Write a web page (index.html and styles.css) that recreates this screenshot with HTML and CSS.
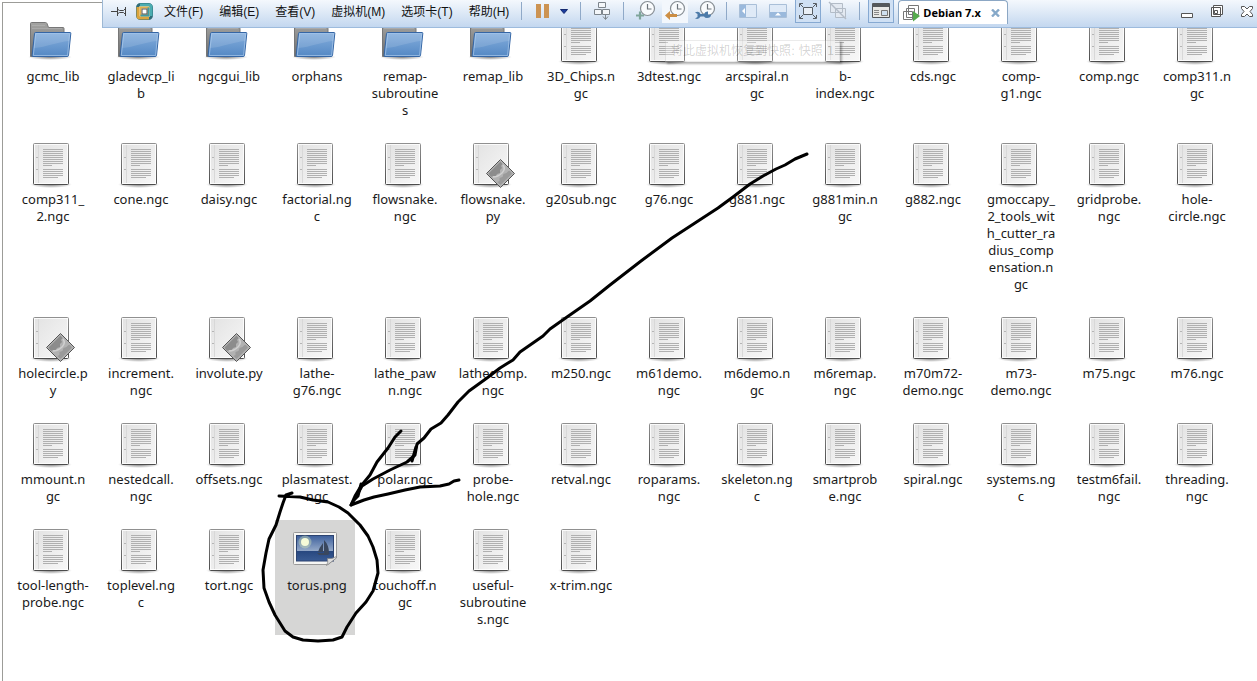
FILE: index.html
```html
<!DOCTYPE html>
<html lang="zh-CN">
<head>
    <meta charset="UTF-8">
    <meta name="viewport" content="width=device-width, initial-scale=1.0">
    <title>Debian 7.x</title>
    <link rel="stylesheet" href="styles.css">
</head>
<body>

    <!-- shared icons -->
    <svg class="defs" width="0" height="0">
        <defs>
            <linearGradient id="gBlue" x1="0" y1="0" x2="0" y2="1">
                <stop offset="0" stop-color="#86afdd"/>
                <stop offset="1" stop-color="#5488c4"/>
            </linearGradient>
            <linearGradient id="gGray" x1="0" y1="0" x2="0" y2="1">
                <stop offset="0" stop-color="#a5a5a3"/>
                <stop offset="1" stop-color="#6c6c6c"/>
            </linearGradient>
            <linearGradient id="gPaper" x1="0" y1="0" x2="1" y2="1">
                <stop offset="0" stop-color="#e2e2e2"/>
                <stop offset="1" stop-color="#f8f8f8"/>
            </linearGradient>
            <linearGradient id="gEdge" x1="0" y1="0" x2="0" y2="1">
                <stop offset="0" stop-color="#909090"/>
                <stop offset="1" stop-color="#4c4c4c"/>
            </linearGradient>
            <linearGradient id="gSky" x1="0" y1="0" x2="0" y2="1">
                <stop offset="0" stop-color="#3c5f9c"/>
                <stop offset=".6" stop-color="#94a9c8"/>
                <stop offset=".61" stop-color="#27477f"/>
                <stop offset="1" stop-color="#3a5c94"/>
            </linearGradient>
            <radialGradient id="gShade">
                <stop offset="0" stop-color="#000" stop-opacity=".5"/>
                <stop offset="1" stop-color="#000" stop-opacity="0"/>
            </radialGradient>
        </defs>
        <symbol id="folder" viewBox="0 0 48 48">
            <ellipse cx="23" cy="40" rx="22" ry="3" fill="url(#gShade)"/>
            <path d="M3.500 39.500V6.500q0-1 1-1h14q1 0 1.500 1l1.500 4H36q1 0 1 1V39.500z" fill="url(#gGray)" stroke="#777"/>
            <path d="M5 8.500h13M5 11.500h30" stroke="#b5b5b5" stroke-width=".6"/>
            <path d="M8.500 15.500H43q1 0 .8 1L41.500 38.500q-.2 1-1.200 1H6q-1 0-.9-1L7.500 16.500q.1-1 1-1z" fill="url(#gBlue)" stroke="#3566a5"/>
            <path d="M8.700 16.500H42.700L40.600 38.500H6.300z" fill="none" stroke="#a9c8eb" stroke-width=".7"/>
            <path d="M8.500 17H42.500L42 24C30 25 20 30 7 31z" fill="#fff" opacity=".12"/>
        </symbol>
        <symbol id="paper" viewBox="0 0 48 48">
            <ellipse cx="24" cy="44.500" rx="21" ry="3.500" fill="url(#gShade)"/>
            <rect x="6.500" y="3.500" width="35" height="41" rx="1" fill="url(#gPaper)" stroke="url(#gEdge)"/>
            <rect x="7.500" y="4.500" width="33" height="39" fill="none" stroke="#fff" stroke-opacity=".8"/>
            <path d="M11.500 5v38" stroke="#d8d8d8"/>
            <path d="M9 17.500h2M9 29.500h2" stroke="#b5b5b5"/>
        </symbol>
        <symbol id="doc" viewBox="0 0 48 48">
            <use href="#paper"/>
            <path d="M16 9.500h20M16 11.500h20M16 13.500h20M16 15.500h20M16 17.500h20M16 19.500h20M16 21.500h20M16 23.500h20M16 25.500h9M16 29.500h20M16 31.500h20M16 33.500h20M16 35.500h20M16 37.500h15" stroke="#b0b0b0"/>
        </symbol>
        <symbol id="py" viewBox="0 0 48 48">
            <use href="#paper"/>
            <path d="M33.500 19.500L47.500 33.500L33.500 47.500L19.500 33.500z" fill="#b2b2b2" stroke="#555"/>
            <path d="M33.500 21.500L35.500 24l-1.500 2 1 2-2 2 0 3-3 1-1 2-3 0-2 1-2.500-3.500z" fill="#8c8c8c"/>
            <path d="M45 33.500L33.500 45l-3-3 2-1 0-3 3-1 1-3 3-1 2-2 1.500 0z" fill="#9a9a9a"/>
            <path d="M36 25q3 4-1 8t-9 4" fill="none" stroke="#d0d0d0" stroke-width="1.500"/>
        </symbol>
        <symbol id="image" viewBox="0 0 48 48">
            <path d="M3.500 6.500h41q1 0 1 1V31l-8 7.500h-34q-1 0-1-1v-30q0-1 1-1z" fill="#f6f6f4" stroke="#999"/>
            <rect x="5.500" y="9.500" width="37" height="25.500" fill="url(#gSky)" stroke="#2c4370"/>
            <circle cx="14" cy="16" r="6.500" fill="#d6e9b8" opacity=".4"/>
            <circle cx="14" cy="16" r="4" fill="#f6fbd8"/>
            <path d="M33 14v13h5q0-8-5-13zM32 17q-4 5-5 9h5zM26 27h13l-2 2h-9z" fill="#39475e"/>
            <path d="M35.500 39.500q2-3 1-7 4 1 9-2v1.500z" fill="#ddd" stroke="#888" stroke-width=".8"/>
        </symbol>
        <symbol id="clock" viewBox="0 0 22 22">
            <circle cx="13.500" cy="8.500" r="7" fill="#f9fbfd" stroke="#878e94" stroke-width="1.200"/>
            <path d="M13.500 4v5h4" fill="none" stroke="#6c747b" stroke-width="1.200"/>
        </symbol>
    </svg>

    <main class="pane">
        <ul class="files" id="files"></ul>
    </main>

    <header class="bar">
        <svg class="pin" width="16" height="12" viewBox="0 0 16 12" fill="none" stroke="#444"><path d="M0 6.500h6M6.500 2v9M7 4.500l1.500 1h4l2-2M7 8.500l1.500-1h4l2 2M14.500 2v9"/></svg>
        <svg class="logo" width="17" height="17" viewBox="0 0 17 17" fill="none">
            <rect x="1.500" y="1.500" width="14" height="14" rx="3" fill="#fff" stroke="#2f6d78" stroke-width="3"/>
            <path d="M4 2h9q2 0 2 2v9" stroke="#4badb1" stroke-width="3"/>
            <path d="M2 4v9q0 2 2 2h9" stroke="#dba43c" stroke-width="3"/>
            <rect x="4.500" y="4.500" width="8" height="8" stroke="#e3b04a" stroke-width="2"/>
            <path d="M4.500 12.500h8v-8" stroke="#3e9ca5" stroke-width="2"/>
            <rect x="6" y="6" width="5" height="5" fill="#fff" stroke="#555"/>
        </svg>
        <nav class="menu">
            <button>文件(F)</button>
            <button>编辑(E)</button>
            <button>查看(V)</button>
            <button>虚拟机(M)</button>
            <button>选项卡(T)</button>
            <button>帮助(H)</button>
        </nav>
        <span class="sep"></span>
        <button class="tool" aria-label="暂停"><svg width="22" height="22" viewBox="0 0 22 22" fill="#cc9352"><path d="M4 4h5v14H4zM12 4h5v14h-5z"/></svg></button>
        <button class="tool arrow" aria-label="电源"><svg width="8" height="5" viewBox="0 0 8 5"><path d="M.5.500h7L4 4.500z" fill="#1b3c9c" stroke="#152a70"/></svg></button>
        <span class="sep"></span>
        <button class="tool" aria-label="发送"><svg width="22" height="22" viewBox="0 0 22 22" fill="#f4f7fa" stroke="#7d858c"><path d="M7.500 2.500h7v5h-7zM3.500 9.500h7v5h-7zM11.500 9.500h7v5h-7z"/><path d="M14.500 14v5M12 16.500l2.500 3 2.500-3" fill="none"/></svg></button>
        <span class="sep"></span>
        <div class="group">
            <button class="tool" aria-label="拍摄快照"><svg width="22" height="22" viewBox="0 0 22 22"><use href="#clock"/><path d="M6 11.500v8M2 15.500h8" stroke="#7fa59a" stroke-width="2.200"/></svg></button>
            <button class="tool hover" aria-label="恢复快照"><svg width="22" height="22" viewBox="0 0 22 22"><use href="#clock"/><path d="M1 15.500l5-4.500v3h7v3H6v3z" fill="#cd8f45"/></svg></button>
            <button class="tool" aria-label="管理快照"><svg width="22" height="22" viewBox="0 0 22 22"><use href="#clock"/><path d="M1 12.500q4-2 5.500 1.500h3.500q1-3 4-2.500v3h3q0 3.500-4 3.500-2 0-3-1.500H6.500q-1.500 3.500-5.500 2l2.500-1.500v-3z" fill="#4d7ba9"/></svg></button>
        </div>
        <span class="sep"></span>
        <div class="group">
            <button class="tool" aria-label="库"><svg width="22" height="22" viewBox="0 0 22 22"><path d="M2.500 4.500h17v13h-17z" fill="#dfeaf7" stroke="#a9bfd8"/><path d="M3 5h6v12H3z" fill="#9ab9dc"/><path d="M5 11l3-3v6z" fill="#fff"/></svg></button>
            <button class="tool" aria-label="缩略图"><svg width="22" height="22" viewBox="0 0 22 22"><path d="M2.500 4.500h17v13h-17z" fill="#dfeaf7" stroke="#a9bfd8"/><path d="M3 12h16v5H3z" fill="#9ab9dc"/><path d="M8 15.500h6l-3-3z" fill="#fff"/></svg></button>
            <button class="tool on" aria-label="全屏"><svg width="22" height="22" viewBox="0 0 22 22" fill="none" stroke="#575d63"><path d="M6.500 7.500h9v7h-9z" fill="#e9eff6"/><path d="M2.500 7V3.500H6M16 3.500h3.500V7M19.500 15v3.500H16M6 18.500H2.500V15M3 4l3 3M19 4l-3 3M19 18l-3-3M3 18l3-3"/></svg></button>
            <button class="tool" aria-label="Unity"><svg width="22" height="22" viewBox="0 0 22 22" fill="#e3e9f1" stroke="#b3bcc7"><path d="M3.500 3.500h12v9h-12zM8.500 8.500h10v9h-10z"/><path d="M2 2l17 17" stroke-width="1.500"/></svg></button>
        </div>
        <span class="sep"></span>
        <button class="tool on" aria-label="控制台"><svg width="22" height="22" viewBox="0 0 22 22" fill="#e8e8e6" stroke="#54585c"><path d="M2.500 3.500h17v14h-17z"/><path d="M3 5.500h16" stroke-width="3"/><path d="M4 10.500h5M4 12.500h5M4 14.500h5" stroke="#888"/><path d="M11.500 10.500h6v5h-6z" fill="#cfe0f0" stroke="#777"/></svg></button>
        <div class="tab">
            <svg width="18" height="18" viewBox="0 0 18 18" fill="#fff" stroke="#777"><path d="M5.500 1.500h10v9h-10zM3.500 4.500h8v9h-8zM.5 7.500h9v8H.500z"/><path d="M10 7l7 5-7 5.500z" fill="#55ab4c" stroke="none"/></svg>
            <span>Debian 7.x</span>
            <button class="close" aria-label="关闭标签"><svg width="9" height="8" viewBox="0 0 9 8" stroke="#86a9c9" stroke-width="2.400"><path d="M1 .5l7 7M8 .5l-7 7"/></svg></button>
        </div>
        <div class="win">
            <button aria-label="最小化"><svg width="14" height="14" viewBox="0 0 14 14"><path d="M1.500 9.500h11v4h-11z" fill="#fff" stroke="#555"/></svg></button>
            <button aria-label="还原"><svg width="14" height="14" viewBox="0 0 14 14" fill="#fff" stroke="#555"><path d="M3.500 1.500h9v9h-9zM1.500 3.500h9v9h-9zM4.500 6.500h3v3h-3z"/></svg></button>
            <button aria-label="关闭"><svg width="14" height="14" viewBox="0 0 14 14" fill="#fff" stroke="#555"><path d="M1.500 2.500h3L7 5l2.500-2.500h3v2L10 7.500l2.500 3v2h-3L7 10l-2.500 2.500h-3v-2l2.500-3-2.500-3z"/></svg></button>
        </div>
    </header>

    <div class="tip">将此虚拟机恢复到快照: 快照 1</div>

    <!-- pen marks -->
    <svg class="ink" width="560" height="500" viewBox="260 150 560 500">
        <path d="M807 154L795 159L785 165L776 169L763 176L750 184L733 197L718 208L695 223L672 238L641 261L610 285L590 301L567 317L550 329L543 336L520 352L513 360L500 368L487 378L469 391L458 402L448 415L441 423L431 429L424 438L417 444L415 455L407 462L390 470L373 479L362 486L357 495L351 505"/>
        <path d="M401 431L395 437L388 448L377 462L370 475L361 486L355 496L351 505L364 500L374 497L388 494L405 490L420 487L440 486L449 484L454 481L459 480"/>
        <path d="M412 461L416 447M361 484L358 496L355 499"/>
        <path d="M292 493L286 495L283 503L280 512L276 525L269 539L266 553L263 570L264 588L269 602L275 615L285 631L293 637L303 640L318 641L333 640L342 637L347 627L356 613L366 602L373 591L378 573L377 560L373 547L368 536L360 525L348 513L339 507L328 502L313 500L300 497L279 496"/>
    </svg>

    <script>
        // a line break in a name is where the label wraps
        const names = [
            'gcmc_lib', 'gladevcp_li\nb', 'ngcgui_lib', 'orphans', 'remap-\nsubroutine\ns', 'remap_lib', '3D_Chips.n\ngc', '3dtest.ngc', 'arcspiral.n\ngc', 'b-\nindex.ngc', 'cds.ngc', 'comp-\ng1.ngc', 'comp.ngc', 'comp311.n\ngc',
            'comp311_\n2.ngc', 'cone.ngc', 'daisy.ngc', 'factorial.ng\nc', 'flowsnake.\nngc', 'flowsnake.\npy', 'g20sub.ngc', 'g76.ngc', 'g881.ngc', 'g881min.n\ngc', 'g882.ngc', 'gmoccapy_\n2_tools_wit\nh_cutter_ra\ndius_comp\nensation.n\ngc', 'gridprobe.\nngc', 'hole-\ncircle.ngc',
            'holecircle.p\ny', 'increment.\nngc', 'involute.py', 'lathe-\ng76.ngc', 'lathe_paw\nn.ngc', 'lathecomp.\nngc', 'm250.ngc', 'm61demo.\nngc', 'm6demo.n\ngc', 'm6remap.\nngc', 'm70m72-\ndemo.ngc', 'm73-\ndemo.ngc', 'm75.ngc', 'm76.ngc',
            'mmount.n\ngc', 'nestedcall.\nngc', 'offsets.ngc', 'plasmatest.\nngc', 'polar.ngc', 'probe-\nhole.ngc', 'retval.ngc', 'roparams.\nngc', 'skeleton.ng\nc', 'smartprob\ne.ngc', 'spiral.ngc', 'systems.ng\nc', 'testm6fail.\nngc', 'threading.\nngc',
            'tool-length-\nprobe.ngc', 'toplevel.ng\nc', 'tort.ngc', 'torus.png', 'touchoff.n\ngc', 'useful-\nsubroutine\ns.ngc', 'x-trim.ngc'
        ];
        const files = document.getElementById('files');

        names.forEach(function(name, i) {
            const full = name.replace(/\n/g, '');
            let icon = 'doc';
            if (i < 6) icon = 'folder';
            else if (full.endsWith('.py')) icon = 'py';
            else if (full.endsWith('.png')) icon = 'image';

            const li = document.createElement('li');
            li.className = full === 'torus.png' ? 'file selected' : 'file';
            li.innerHTML = `<svg width="48" height="48"><use href="#${icon}"/></svg><span class="name">${name}</span>`;
            files.appendChild(li);
        });
    </script>
</body>
</html>
```
FILE: styles.css
```css
* {
    box-sizing: border-box;
}
body {
    margin: 0;
    min-height: 100vh;
    padding: 2px 0 0 2px;
    background: #fff;
    display: flex;
    font-family: "Noto Sans", "Noto Sans CJK SC", sans-serif;
    position: relative;
    overflow: hidden;
}
button {
    border: 0;
    padding: 0;
    background: none;
    font: inherit;
    color: inherit;
}
svg {
    display: block;
    flex: none;
}
.defs {
    position: absolute;
}

/* file icons */
.pane {
    flex: 1;
    border-left: 1px solid #9c9c98;
    border-top: 1px solid #9c9c98;
    padding: 8px;
}
.files {
    list-style: none;
    margin: 0;
    padding: 0;
    display: grid;
    grid-template-columns: repeat(auto-fill, 80px);
    gap: 8px;
}
.file {
    padding: 6px 0 7px;
    display: flex;
    flex-direction: column;
    align-items: center;
    gap: 3px;
}
.selected {
    background: #d6d6d5;
}
.name {
    padding-left: 4px;
    font-size: 13px;
    line-height: 17px;
    color: #1a1a1a;
    text-align: center;
    white-space: pre;
}

/* top bar lies over the desktop */
.bar {
    position: absolute;
    top: 0;
    left: 102px;
    right: 0;
    height: 28px;
    padding: 0 3px 5px 8px;
    display: flex;
    align-items: center;
    background: linear-gradient(#f4f8fd, #dce8f6 50%, #c3d7ef);
    border-left: 1px solid #9db8d4;
    border-bottom: 1px solid #9dbbdd;
    font-family: "Liberation Sans", "Noto Sans CJK SC", sans-serif;
    font-size: 12px;
    color: #111;
}
.pin {
    margin-right: 9px;
}
.logo {
    margin-right: 11px;
}
.menu {
    display: flex;
    gap: 16px;
    margin-right: 4px;
    padding-bottom: 2px;
}
.sep {
    width: 1px;
    height: 18px;
    margin: 0 8px;
    background: #8fa9c8;
}
.group {
    display: flex;
    gap: 4px;
}
.tool {
    width: 26px;
    height: 24px;
    display: flex;
    align-items: center;
    justify-content: center;
    flex: none;
}
.arrow {
    width: 16px;
}
.hover {
    background: #f3f7fc;
}
.on {
    background: #cfe0f4;
    border: 1px solid #86a9d2;
}
.tab {
    align-self: flex-start;
    height: 24px;
    margin-left: 4px;
    padding: 0 7px 0 4px;
    display: flex;
    align-items: center;
    gap: 2px;
    background: #fff;
    border: 1px solid #8ca7c4;
    border-bottom: 0;
    border-radius: 4px 4px 0 0;
    font-family: "Open Sans", sans-serif;
    font-size: 11px;
    font-weight: bold;
    color: #000;
}
.close {
    margin-left: 8px;
}
.win {
    margin-left: auto;
    display: flex;
    gap: 16px;
}

/* fading tooltip */
.tip {
    position: absolute;
    top: 40px;
    left: 665px;
    height: 22px;
    padding: 0 5px;
    border: 1px solid rgba(0, 0, 0, .08);
    background: rgba(255, 255, 255, .3);
    box-shadow: 2px 2px 2px rgba(0, 0, 0, .3);
    font-family: "DejaVu Sans", "Noto Sans CJK SC", sans-serif;
    font-size: 12px;
    line-height: 20px;
    color: rgba(0, 0, 0, .18);
}

.ink {
    position: absolute;
    top: 150px;
    left: 260px;
    fill: none;
    stroke: #000;
    stroke-width: 3px;
    stroke-linecap: round;
    stroke-linejoin: round;
    pointer-events: none;
}
```
